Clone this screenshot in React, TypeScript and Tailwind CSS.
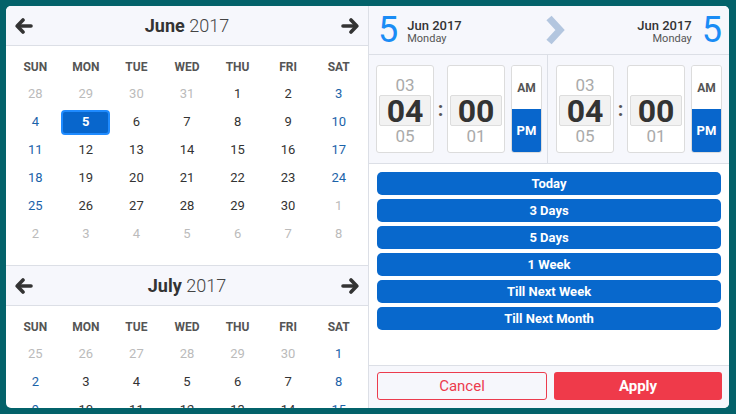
import React from "react";

type Cell = { d: number; cur: boolean };

function buildMonth(startPrevDay: number, prevLen: number, len: number): Cell[] {
  const cells: Cell[] = [];
  for (let d = startPrevDay; d <= prevLen; d++) cells.push({ d, cur: false });
  for (let d = 1; d <= len; d++) cells.push({ d, cur: true });
  let n = 1;
  while (cells.length < 42) cells.push({ d: n++, cur: false });
  return cells;
}

const DAYS = ["SUN", "MON", "TUE", "WED", "THU", "FRI", "SAT"];

function Arrow({ dir }: { dir: "left" | "right" }) {
  return (
    <svg
      width="18"
      height="16"
      viewBox="0 0 18 16"
      style={{ transform: dir === "right" ? "scaleX(-1)" : undefined }}
    >
      <path d="M16 8 H4" stroke="#333" strokeWidth="3.6" strokeLinecap="round" fill="none" />
      <path d="M8 2 L2.2 8 L8 14" stroke="#333" strokeWidth="3.6" strokeLinecap="round" strokeLinejoin="round" fill="none" />
    </svg>
  );
}

function Calendar({ month, cells, selected }: { month: string; cells: Cell[]; selected?: number }) {
  return (
    <div className="shrink-0 border-b border-[#dcdfe6]">
      <div className="h-[40px] bg-[#f6f7fc] border-b border-[#dcdfe6] flex items-center justify-between pl-[9px] pr-[9px]">
        <Arrow dir="left" />
        <div className="text-[18px] text-[#333]">
          <span className="font-bold">{month}</span> <span className="font-light text-[#444]">2017</span>
        </div>
        <Arrow dir="right" />
      </div>
      <div className="px-[4px] pt-[9px] pb-[17px]">
        <div className="grid grid-cols-7 h-[24px] items-center">
          {DAYS.map((d) => (
            <div key={d} className="text-center text-[12px] font-bold text-[#555]">
              {d}
            </div>
          ))}
        </div>
        <div className="grid grid-cols-7 pt-[1px]">
          {cells.map((c, i) => {
            const col = i % 7;
            const weekend = col === 0 || col === 6;
            const isSel = c.cur && c.d === selected;
            let color = "text-[#333]";
            if (!c.cur) color = "text-[#bbb]";
            else if (weekend) color = "text-[#1b63a9]";
            return (
              <div key={i} className="h-[28px] flex items-center justify-center">
                {isSel ? (
                  <div className="w-[49px] h-[25px] rounded-[4px] bg-[#0866cc] border-2 border-[#1f8bff] flex items-center justify-center text-white font-bold text-[13px]">
                    {c.d}
                  </div>
                ) : (
                  <span className={`text-[13px] ${color}`}>{c.d}</span>
                )}
              </div>
            );
          })}
        </div>
      </div>
    </div>
  );
}

function Spinner({ prev, cur, next }: { prev: string; cur: string; next: string }) {
  return (
    <div className="w-[58px] h-[88px] bg-white border border-[#dcdcdc] rounded-[3px] flex flex-col items-center pt-[9px]">
      <div className="h-[20px] leading-[20px] text-[17px] text-[#aaa]">{prev}</div>
      <div className="w-[52px] h-[31px] bg-[#f2f2f2] border border-[#dddddd] rounded-[2px] flex items-center justify-center text-[32px] font-bold text-[#333] leading-none">
        {cur}
      </div>
      <div className="h-[20px] leading-[20px] text-[17px] text-[#aaa]">{next}</div>
    </div>
  );
}

function TimePicker() {
  return (
    <div className="flex items-start">
      <Spinner prev="03" cur="04" next="05" />
      <div className="w-[13px] h-[88px] flex items-center justify-center text-[20px] font-bold text-[#555]">:</div>
      <Spinner prev="" cur="00" next="01" />
      <div className="w-[31px] h-[88px] ml-[6px] rounded-[3px] border border-[#dcdcdc] overflow-hidden flex flex-col">
        <div className="flex-1 bg-white flex items-center justify-center text-[12px] font-bold text-[#555]">AM</div>
        <div className="flex-1 bg-[#0866cc] flex items-center justify-center text-[13px] font-bold text-white">PM</div>
      </div>
    </div>
  );
}

export default function App() {
  const june = buildMonth(28, 31, 30);
  const july = buildMonth(25, 30, 31);
  const presets = ["Today", "3 Days", "5 Days", "1 Week", "Till Next Week", "Till Next Month"];
  return (
    <div
      className="w-[736px] h-[414px] bg-[#03626a] pt-[6px] pl-[6px]"
      style={{ fontFamily: "Roboto, 'Liberation Sans', sans-serif" }}
    >
      <div className="w-[723px] h-[402px] rounded-[5px] overflow-hidden flex bg-white">
        <div className="w-[363px] h-full border-r border-[#dcdfe6] overflow-hidden flex flex-col">
          <Calendar month="June" cells={june} selected={5} />
          <Calendar month="July" cells={july} />
        </div>
        <div className="w-[360px] h-full flex flex-col">
          <div className="h-[49px] shrink-0 bg-[#f6f7fc] border-b border-[#dcdfe6] flex items-center justify-between pl-[9px] pr-[7px]">
            <div className="flex items-center">
              <span className="text-[36px] leading-none text-[#1a8cf5]">5</span>
              <div className="ml-[9px] flex flex-col leading-none mt-[2px]">
                <span className="text-[13px] font-medium text-[#333]">Jun 2017</span>
                <span className="text-[11px] text-[#555] mt-[1px]">Monday</span>
              </div>
            </div>
            <svg width="22" height="30" viewBox="0 0 22 30" className="ml-[10px]">
              <polyline points="5,3 16,15 5,27" fill="none" stroke="#b3c6df" strokeWidth="7" strokeLinejoin="miter" />
            </svg>
            <div className="flex items-center">
              <div className="mr-[10px] flex flex-col items-end leading-none mt-[2px]">
                <span className="text-[13px] font-medium text-[#333]">Jun 2017</span>
                <span className="text-[11px] text-[#555] mt-[1px]">Monday</span>
              </div>
              <span className="text-[36px] leading-none text-[#1a8cf5]">5</span>
            </div>
          </div>
          <div className="h-[109px] shrink-0 bg-[#f6f7fc] border-b border-[#dcdfe6] flex">
            <div className="w-[179px] border-r border-[#dcdfe6] pt-[10px] pl-[7px]">
              <TimePicker />
            </div>
            <div className="flex-1 pt-[10px] pl-[8px]">
              <TimePicker />
            </div>
          </div>
          <div className="flex-1 bg-white px-[8px] pt-[8px] flex flex-col gap-[4px]">
            {presets.map((p) => (
              <div
                key={p}
                className="h-[23px] rounded-[5px] bg-[#0868cc] flex items-center justify-center text-white text-[13px] font-bold"
              >
                {p}
              </div>
            ))}
          </div>
          <div className="h-[43px] shrink-0 bg-[#f6f7fc] border-t border-[#dcdfe6] flex gap-[7px] pl-[8px] pr-[7px] pt-[6px]">
            <div className="flex-1 h-[28px] rounded-[3px] border border-[#ec3c4e] bg-[#f6f7fc] flex items-center justify-center text-[15px] text-[#ec3c4e]">
              Cancel
            </div>
            <div className="flex-1 h-[28px] rounded-[3px] bg-[#ef3a4a] flex items-center justify-center text-[15px] font-bold text-white">
              Apply
            </div>
          </div>
        </div>
      </div>
    </div>
  );
}
